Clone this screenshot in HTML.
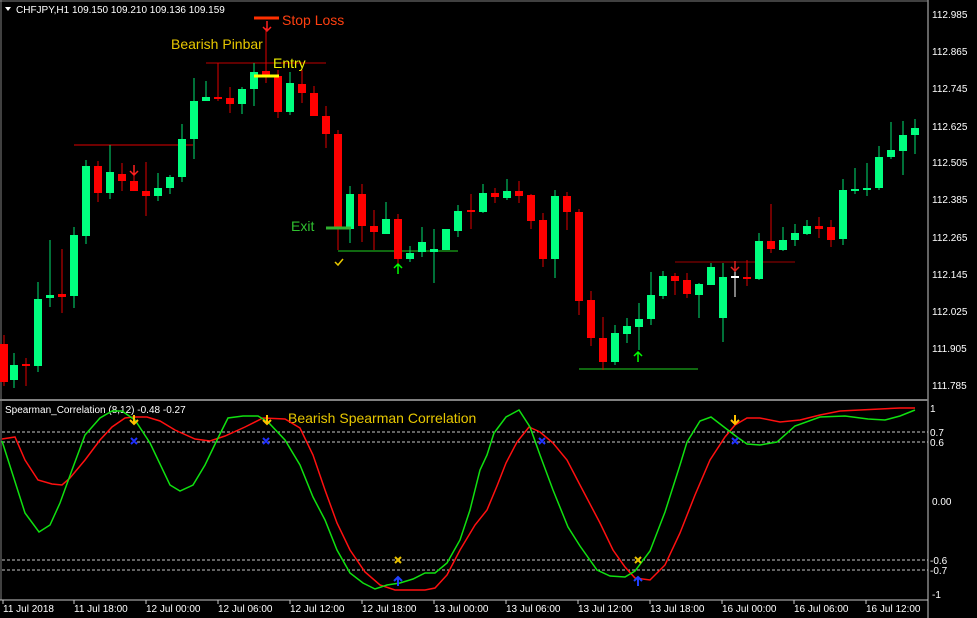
<!DOCTYPE html><html><head><style>body{margin:0;background:#000;width:977px;height:618px;overflow:hidden}svg{display:block}text{font-family:"Liberation Sans",sans-serif}</style></head><body>
<svg width="977" height="618" viewBox="0 0 977 618" xmlns="http://www.w3.org/2000/svg">
<rect width="977" height="618" fill="#000"/>
<line x1="928" y1="0" x2="928" y2="618" stroke="#c8c8c8"/>
<line x1="0" y1="1" x2="928" y2="1" stroke="#808080"/>
<line x1="1" y1="0" x2="1" y2="600" stroke="#808080"/>
<line x1="0" y1="400" x2="928" y2="400" stroke="#808080" stroke-width="2"/>
<line x1="0" y1="600" x2="928" y2="600" stroke="#c8c8c8"/>
<g font-size="10" fill="#fff">
<text x="932" y="18">112.985</text><text x="932" y="55">112.865</text><text x="932" y="92">112.745</text><text x="932" y="130">112.625</text><text x="932" y="166">112.505</text><text x="932" y="203">112.385</text><text x="932" y="241">112.265</text><text x="932" y="278">112.145</text><text x="932" y="315">112.025</text><text x="932" y="352">111.905</text><text x="932" y="389">111.785</text>
<text x="930" y="412">1</text><text x="930" y="436">0.7</text><text x="930" y="446">0.6</text><text x="932" y="505">0.00</text><text x="930" y="564">-0.6</text><text x="930" y="574">-0.7</text><text x="932" y="598">-1</text>
</g>
<polygon points="5,7 11,7 8,11" fill="#fff"/>
<text x="16" y="13" font-size="10" fill="#fff">CHFJPY,H1  109.150 109.210 109.136 109.159</text>
<line x1="74" y1="145" x2="193" y2="145" stroke="#e00000"/>
<line x1="206" y1="63" x2="326" y2="63" stroke="#c00000"/>
<line x1="338" y1="251" x2="458" y2="251" stroke="#20d020"/>
<line x1="579" y1="369" x2="698" y2="369" stroke="#20d020"/>
<line x1="675" y1="262" x2="795" y2="262" stroke="#a00000"/>
<!-- green candles -->
<g stroke="#00e070">
<line x1="14" y1="353" x2="14" y2="388"/><line x1="38" y1="282" x2="38" y2="372"/><line x1="50" y1="240" x2="50" y2="307"/><line x1="74" y1="227" x2="74" y2="308"/><line x1="86" y1="160" x2="86" y2="244"/><line x1="110" y1="145" x2="110" y2="199"/><line x1="158" y1="173" x2="158" y2="201"/><line x1="170" y1="175" x2="170" y2="194"/><line x1="182" y1="124" x2="182" y2="182"/><line x1="194" y1="78" x2="194" y2="159"/><line x1="206" y1="81" x2="206" y2="101"/><line x1="242" y1="87" x2="242" y2="114"/><line x1="254" y1="63" x2="254" y2="106"/><line x1="290" y1="72" x2="290" y2="115"/><line x1="350" y1="186" x2="350" y2="243"/><line x1="386" y1="202" x2="386" y2="234"/><line x1="410" y1="246" x2="410" y2="262"/><line x1="422" y1="227" x2="422" y2="257"/><line x1="434" y1="229" x2="434" y2="283"/><line x1="446" y1="229" x2="446" y2="250"/><line x1="458" y1="205" x2="458" y2="237"/><line x1="483" y1="184" x2="483" y2="213"/><line x1="507" y1="179" x2="507" y2="200"/><line x1="555" y1="190" x2="555" y2="278"/><line x1="615" y1="325" x2="615" y2="365"/><line x1="627" y1="318" x2="627" y2="343"/><line x1="639" y1="303" x2="639" y2="350"/><line x1="651" y1="272" x2="651" y2="325"/><line x1="663" y1="271" x2="663" y2="299"/><line x1="699" y1="283" x2="699" y2="318"/><line x1="711" y1="263" x2="711" y2="285"/><line x1="723" y1="263" x2="723" y2="342"/><line x1="759" y1="233" x2="759" y2="280"/><line x1="783" y1="227" x2="783" y2="251"/><line x1="795" y1="224" x2="795" y2="246"/><line x1="807" y1="220" x2="807" y2="235"/><line x1="843" y1="179" x2="843" y2="245"/><line x1="855" y1="168" x2="855" y2="194"/><line x1="867" y1="163" x2="867" y2="196"/><line x1="879" y1="146" x2="879" y2="190"/><line x1="891" y1="122" x2="891" y2="159"/><line x1="903" y1="121" x2="903" y2="175"/><line x1="915" y1="119" x2="915" y2="154"/>
</g>
<g fill="#00ff7f">
<rect x="10" y="365" width="8" height="15"/><rect x="34" y="299" width="8" height="67"/><rect x="46" y="295" width="8" height="3"/><rect x="70" y="235" width="8" height="61"/><rect x="82" y="166" width="8" height="70"/><rect x="106" y="172" width="8" height="21"/><rect x="154" y="188" width="8" height="8"/><rect x="166" y="177" width="8" height="11"/><rect x="178" y="139" width="8" height="38"/><rect x="190" y="101" width="8" height="38"/><rect x="202" y="97" width="8" height="4"/><rect x="238" y="89" width="8" height="15"/><rect x="250" y="72" width="8" height="17"/><rect x="286" y="83" width="8" height="29"/><rect x="346" y="194" width="8" height="35"/><rect x="382" y="219" width="8" height="15"/><rect x="406" y="253" width="8" height="6"/><rect x="418" y="242" width="8" height="10"/><rect x="430" y="249" width="8" height="3"/><rect x="442" y="229" width="8" height="21"/><rect x="454" y="211" width="8" height="20"/><rect x="479" y="193" width="8" height="19"/><rect x="503" y="191" width="8" height="7"/><rect x="551" y="196" width="8" height="63"/><rect x="611" y="333" width="8" height="29"/><rect x="623" y="326" width="8" height="8"/><rect x="635" y="319" width="8" height="8"/><rect x="647" y="295" width="8" height="24"/><rect x="659" y="276" width="8" height="20"/><rect x="695" y="284" width="8" height="11"/><rect x="707" y="267" width="8" height="18"/><rect x="719" y="277" width="8" height="41"/><rect x="755" y="241" width="8" height="38"/><rect x="779" y="240" width="8" height="10"/><rect x="791" y="233" width="8" height="7"/><rect x="803" y="226" width="8" height="8"/><rect x="839" y="190" width="8" height="49"/><rect x="851" y="189" width="8" height="2"/><rect x="863" y="188" width="8" height="2"/><rect x="875" y="157" width="8" height="31"/><rect x="887" y="150" width="8" height="7"/><rect x="899" y="135" width="8" height="16"/><rect x="911" y="128" width="8" height="7"/>
</g>
<!-- red candles -->
<g stroke="#e00000">
<line x1="4" y1="335" x2="4" y2="386"/><line x1="26" y1="358" x2="26" y2="386"/><line x1="62" y1="249" x2="62" y2="313"/><line x1="98" y1="161" x2="98" y2="202"/><line x1="122" y1="163" x2="122" y2="191"/><line x1="134" y1="168" x2="134" y2="191"/><line x1="146" y1="162" x2="146" y2="216"/><line x1="218" y1="63" x2="218" y2="101"/><line x1="230" y1="87" x2="230" y2="113"/><line x1="266" y1="28" x2="266" y2="83"/><line x1="278" y1="70" x2="278" y2="118"/><line x1="302" y1="70" x2="302" y2="103"/><line x1="314" y1="86" x2="314" y2="116"/><line x1="326" y1="106" x2="326" y2="148"/><line x1="338" y1="130" x2="338" y2="250"/><line x1="362" y1="184" x2="362" y2="242"/><line x1="374" y1="210" x2="374" y2="250"/><line x1="398" y1="214" x2="398" y2="265"/><line x1="471" y1="194" x2="471" y2="229"/><line x1="495" y1="188" x2="495" y2="203"/><line x1="519" y1="181" x2="519" y2="203"/><line x1="531" y1="194" x2="531" y2="229"/><line x1="543" y1="213" x2="543" y2="267"/><line x1="567" y1="192" x2="567" y2="230"/><line x1="579" y1="209" x2="579" y2="315"/><line x1="591" y1="291" x2="591" y2="346"/><line x1="603" y1="317" x2="603" y2="370"/><line x1="675" y1="273" x2="675" y2="295"/><line x1="687" y1="273" x2="687" y2="298"/><line x1="747" y1="260" x2="747" y2="286"/><line x1="771" y1="204" x2="771" y2="253"/><line x1="819" y1="217" x2="819" y2="238"/><line x1="831" y1="220" x2="831" y2="247"/>
</g>
<g fill="#ff0000">
<rect x="0" y="344" width="8" height="38"/><rect x="22" y="364" width="8" height="2"/><rect x="58" y="294" width="8" height="3"/><rect x="94" y="166" width="8" height="27"/><rect x="118" y="174" width="8" height="7"/><rect x="130" y="181" width="8" height="10"/><rect x="142" y="191" width="8" height="5"/><rect x="214" y="97" width="8" height="2"/><rect x="226" y="98" width="8" height="6"/><rect x="262" y="71" width="8" height="5"/><rect x="274" y="76" width="8" height="36"/><rect x="298" y="84" width="8" height="9"/><rect x="310" y="93" width="8" height="23"/><rect x="322" y="116" width="8" height="18"/><rect x="334" y="134" width="8" height="94"/><rect x="358" y="194" width="8" height="32"/><rect x="370" y="226" width="8" height="6"/><rect x="394" y="219" width="8" height="40"/><rect x="467" y="210" width="8" height="2"/><rect x="491" y="193" width="8" height="4"/><rect x="515" y="191" width="8" height="5"/><rect x="527" y="195" width="8" height="26"/><rect x="539" y="220" width="8" height="39"/><rect x="563" y="196" width="8" height="16"/><rect x="575" y="212" width="8" height="89"/><rect x="587" y="300" width="8" height="38"/><rect x="599" y="338" width="8" height="24"/><rect x="671" y="276" width="8" height="5"/><rect x="683" y="280" width="8" height="14"/><rect x="743" y="277" width="8" height="2"/><rect x="767" y="241" width="8" height="8"/><rect x="815" y="226" width="8" height="3"/><rect x="827" y="227" width="8" height="13"/>
</g>
<line x1="735" y1="270" x2="735" y2="297" stroke="#fff"/><rect x="731" y="276" width="8" height="2" fill="#fff"/>
<!-- annotations -->
<line x1="254" y1="18" x2="279" y2="18" stroke="#ff3000" stroke-width="3"/>
<text x="282" y="25" font-size="14" fill="#ff4010">Stop Loss</text>
<text x="171" y="49" font-size="14" fill="#e8c800">Bearish Pinbar</text>
<text x="273" y="68" font-size="14" fill="#f0f000">Entry</text>
<line x1="254" y1="76" x2="279" y2="76" stroke="#ffff00" stroke-width="3"/>
<text x="291" y="231" font-size="14" fill="#30c030">Exit</text>
<line x1="326" y1="228" x2="351" y2="228" stroke="#30b030" stroke-width="3"/>
<g fill="none" stroke-width="1.5">
<path d="M267 21v10M263 27l4 4 4-4" stroke="#ff2020"/>
<path d="M134 165v10M130 171l4 4 4-4" stroke="#ff2020"/>
<path d="M735 261v10M731 267l4 4 4-4" stroke="#e02020"/>
<path d="M398 264v10M394 268l4-4 4 4" stroke="#00ff00"/>
<path d="M638 352v10M634 356l4-4 4 4" stroke="#00ff00"/>
<path d="M335 262l3 3 5-6" stroke="#e8c800"/>
</g>
<!-- indicator -->
<text x="5" y="413" font-size="10" fill="#fff">Spearman_Correlation (8,12) -0.48 -0.27</text>
<text x="288" y="423" font-size="14" fill="#e8c800">Bearish Spearman Correlation</text>
<g stroke="#c8c8c8" stroke-dasharray="3,2" stroke-width="1">
<line x1="2" y1="432" x2="928" y2="432"/><line x1="2" y1="442" x2="928" y2="442"/>
<line x1="2" y1="560" x2="928" y2="560"/><line x1="2" y1="570" x2="928" y2="570"/>
</g>
<polyline fill="none" stroke="#ff1010" stroke-width="1.5" points="2,439 15,437 25,460 38,480 52,484 62,485 70,478 85,460 100,440 112,427 125,418 133,417 147,417 160,421 175,430 195,439 210,441 225,436 245,427 263,418 285,419 300,428 313,455 325,490 337,523 350,550 365,572 380,585 395,590 410,590 425,590 435,588 447,575 460,550 475,525 487,510 497,486 506,463 517,442 529,427 540,432 553,443 567,460 580,485 600,523 613,550 625,567 635,578 650,580 665,565 680,533 695,495 710,460 725,437 735,425 747,418 760,418 780,422 800,420 820,415 840,411 860,410 880,409 900,408 915,408"/>
<polyline fill="none" stroke="#10e010" stroke-width="1.5" points="2,441 25,513 39,532 50,525 60,503 72,470 85,435 100,418 112,411 122,411 135,420 150,443 170,485 180,491 193,485 205,465 218,438 228,418 243,416 258,416 268,422 285,440 300,465 313,497 325,520 337,550 350,573 363,583 375,589 387,585 400,583 413,579 425,573 435,573 447,563 460,540 470,510 480,470 487,455 494,433 506,417 519,410 530,427 540,455 553,490 568,527 580,546 597,570 610,576 625,577 635,571 650,551 665,512 680,465 687,442 700,421 711,417 724,427 737,437 747,444 760,445 777,442 795,426 820,417 845,416 868,419 885,420 900,416 915,410"/>
<g fill="none" stroke-width="2">
<path d="M134 415v9M130 420l4 4 4-4" stroke="#ffc000"/>
<path d="M267 415v9M263 420l4 4 4-4" stroke="#ffc000"/>
<path d="M735 415v9M731 420l4 4 4-4" stroke="#ffc000"/>
<path d="M398 577v9M394 581l4-4 4 4" stroke="#2040ff"/>
<path d="M638 577v9M634 581l4-4 4 4" stroke="#2040ff"/>
<path d="M131 438l6 6M137 438l-6 6M263 438l6 6M269 438l-6 6M539 438l6 6M545 438l-6 6M732 438l6 6M738 438l-6 6" stroke="#2030ff"/>
<path d="M395 557l6 6M401 557l-6 6M635 557l6 6M641 557l-6 6" stroke="#e8c000"/>
</g>
<g stroke="#c8c8c8"><line x1="3" y1="600" x2="3" y2="604"/><line x1="74" y1="600" x2="74" y2="604"/><line x1="146" y1="600" x2="146" y2="604"/><line x1="218" y1="600" x2="218" y2="604"/><line x1="290" y1="600" x2="290" y2="604"/><line x1="362" y1="600" x2="362" y2="604"/><line x1="434" y1="600" x2="434" y2="604"/><line x1="506" y1="600" x2="506" y2="604"/><line x1="578" y1="600" x2="578" y2="604"/><line x1="650" y1="600" x2="650" y2="604"/><line x1="722" y1="600" x2="722" y2="604"/><line x1="794" y1="600" x2="794" y2="604"/><line x1="866" y1="600" x2="866" y2="604"/></g>
<g font-size="10" fill="#fff">
<text x="3" y="612">11 Jul 2018</text><text x="74" y="612">11 Jul 18:00</text><text x="146" y="612">12 Jul 00:00</text><text x="218" y="612">12 Jul 06:00</text><text x="290" y="612">12 Jul 12:00</text><text x="362" y="612">12 Jul 18:00</text><text x="434" y="612">13 Jul 00:00</text><text x="506" y="612">13 Jul 06:00</text><text x="578" y="612">13 Jul 12:00</text><text x="650" y="612">13 Jul 18:00</text><text x="722" y="612">16 Jul 00:00</text><text x="794" y="612">16 Jul 06:00</text><text x="866" y="612">16 Jul 12:00</text>
</g>
</svg>
</body></html>
